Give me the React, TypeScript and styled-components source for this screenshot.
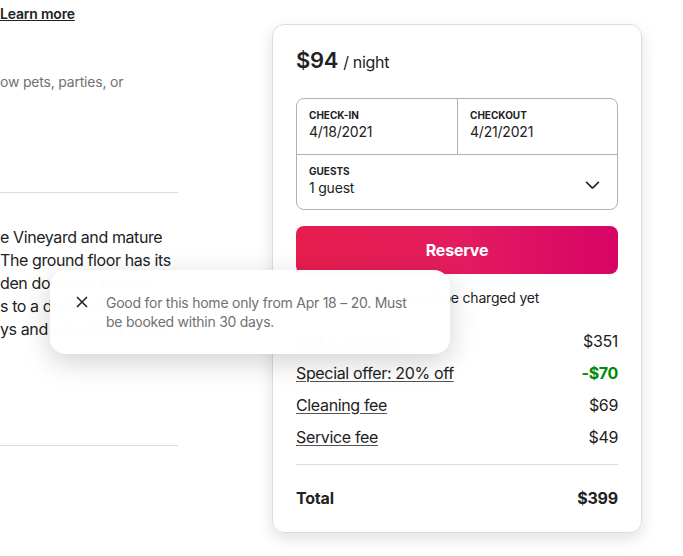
import React from "react";
import styled, { createGlobalStyle } from "styled-components";

const Global = createGlobalStyle`
  html, body { margin: 0; padding: 0; background: #fff; }
  body {
    font-family: Inter, "Noto Sans", "Liberation Sans", sans-serif;
    color: #222222;
    -webkit-font-smoothing: antialiased;
  }
  * { box-sizing: border-box; }
`;

const Page = styled.div`
  position: relative;
  display: flex;
  align-items: flex-start;
  gap: 94px;
  width: 683px;
  height: 556px;
  overflow: hidden;
`;

const LeftColumn = styled.div`
  width: 178px;
  flex: none;
  overflow: hidden;
  display: flex;
  flex-direction: column;
`;

const LearnLink = styled.a`
  margin-top: 4px;
  font-size: 14px;
  line-height: 20px;
  font-weight: 600;
  letter-spacing: -0.2px;
  color: #222;
  text-decoration: underline;
  white-space: nowrap;
`;

const MutedLine = styled.div`
  margin-top: 48px;
  font-size: 14px;
  line-height: 20px;
  letter-spacing: -0.2px;
  color: #717171;
  white-space: nowrap;
`;

const Rule = styled.hr<{ $top: number }>`
  margin: ${(p) => p.$top}px 0 0;
  border: none;
  border-top: 1px solid #dddddd;
  width: 100%;
`;

const Paragraph = styled.div`
  margin-top: 33px;
  display: flex;
  flex-direction: column;
`;

const ParaLine = styled.span`
  font-size: 16px;
  line-height: 23px;
  letter-spacing: -0.4px;
  white-space: nowrap;
  color: #222;
`;

const Card = styled.aside`
  margin-top: 24px;
  width: 370px;
  flex: none;
  border: 1px solid #dddddd;
  border-radius: 12px;
  padding: 22px 23px 24px;
  box-shadow: rgba(0, 0, 0, 0.12) 0px 6px 16px;
  display: flex;
  flex-direction: column;
`;

const PriceRow = styled.div`
  display: flex;
  align-items: baseline;
  gap: 5px;
  line-height: 26px;
`;

const Price = styled.span`
  font-size: 22px;
  font-weight: 600;
  letter-spacing: -0.3px;
  color: #222;
`;

const PerNight = styled.span`
  font-size: 16px;
  letter-spacing: -0.3px;
  color: #222;
`;

const DateBox = styled.div`
  margin-top: 23px;
  border: 1px solid #b0b0b0;
  border-radius: 8px;
  display: grid;
  grid-template-columns: 1fr 1fr;
`;

const Cell = styled.div<{ $divider?: boolean; $wide?: boolean }>`
  height: 55px;
  padding: 10px 12px 0;
  grid-column: ${(p) => (p.$wide ? "1 / span 2" : "auto")};
  border-left: ${(p) => (p.$divider ? "1px solid #b0b0b0" : "none")};
  border-top: ${(p) => (p.$wide ? "1px solid #b0b0b0" : "none")};
  display: flex;
  align-items: center;
  justify-content: space-between;
`;

const CellText = styled.div`
  display: flex;
  flex-direction: column;
  align-self: flex-start;
`;

const FieldLabel = styled.span`
  font-size: 10px;
  line-height: 12px;
  font-weight: 700;
  text-transform: uppercase;
  color: #222;
`;

const FieldValue = styled.span`
  margin-top: 2px;
  font-size: 14px;
  line-height: 18px;
  letter-spacing: -0.2px;
  color: #222;
`;

const Chevron = styled.svg`
  width: 17px;
  height: 17px;
  margin-right: 4px;
  margin-top: -6px;
  flex: none;
`;

const ReserveButton = styled.button`
  margin-top: 16px;
  height: 48px;
  width: 100%;
  border: none;
  border-radius: 8px;
  background: linear-gradient(to right, #e61e4d 0%, #e31c5f 50%, #d70466 100%);
  color: #fff;
  font-family: inherit;
  font-size: 16px;
  font-weight: 700;
  letter-spacing: -0.2px;
  cursor: pointer;
`;

const Notice = styled.div`
  margin-top: 15px;
  text-align: center;
  font-size: 14px;
  line-height: 18px;
  letter-spacing: -0.2px;
  color: #222;
`;

const Breakdown = styled.div`
  margin-top: 24px;
  display: flex;
  flex-direction: column;
  gap: 12px;
`;

const LineItem = styled.div`
  display: flex;
  justify-content: space-between;
  font-size: 16px;
  line-height: 20px;
  letter-spacing: -0.35px;
  color: #222;
`;

const ItemLabel = styled.span`
  text-decoration: underline;
  text-decoration-color: #555;
  text-underline-offset: 2px;
`;

const ItemValue = styled.span<{ $discount?: boolean }>`
  color: ${(p) => (p.$discount ? "#008a05" : "#222")};
  font-weight: ${(p) => (p.$discount ? 700 : 400)};
`;

const CardRule = styled.hr`
  margin: 17px 0 0;
  border: none;
  border-top: 1px solid #dddddd;
`;

const TotalRow = styled.div`
  margin-top: 23px;
  display: flex;
  justify-content: space-between;
  font-size: 16px;
  line-height: 20px;
  font-weight: 700;
  letter-spacing: -0.2px;
  color: #222;
`;

const Toast = styled.div`
  position: absolute;
  left: 50px;
  top: 270px;
  width: 400px;
  height: 84px;
  border-radius: 16px;
  background: rgba(255, 255, 255, 0.99);
  box-shadow: rgba(0, 0, 0, 0.18) 0px 8px 28px;
  display: flex;
  align-items: flex-start;
  gap: 18px;
  padding: 23px 20px 0 26px;
`;

const CloseIcon = styled.svg`
  width: 12px;
  height: 12px;
  margin-top: 3px;
  flex: none;
`;

const ToastText = styled.p`
  margin: 0;
  width: 318px;
  font-size: 14px;
  line-height: 19px;
  letter-spacing: -0.25px;
  color: #717171;
`;

const lineItems = [
  { label: "$94 x 3 nights", value: "$351" },
  { label: "Special offer: 20% off", value: "-$70", discount: true },
  { label: "Cleaning fee", value: "$69" },
  { label: "Service fee", value: "$49" },
];

export default function App() {
  return (
    <>
      <Global />
      <Page>
        <LeftColumn>
          <LearnLink href="#">Learn more</LearnLink>
          <MutedLine>ow pets, parties, or</MutedLine>
          <Rule $top={100} />
          <Paragraph>
            <ParaLine>e Vineyard and mature</ParaLine>
            <ParaLine>The ground floor has its</ParaLine>
            <ParaLine>den door and private</ParaLine>
            <ParaLine>s to a deck with</ParaLine>
            <ParaLine>ys and woodland views.</ParaLine>
          </Paragraph>
          <Rule $top={104} />
        </LeftColumn>

        <Card>
          <PriceRow>
            <Price>$94</Price>
            <PerNight>/ night</PerNight>
          </PriceRow>

          <DateBox>
            <Cell>
              <CellText>
                <FieldLabel>Check-in</FieldLabel>
                <FieldValue>4/18/2021</FieldValue>
              </CellText>
            </Cell>
            <Cell $divider>
              <CellText>
                <FieldLabel>Checkout</FieldLabel>
                <FieldValue>4/21/2021</FieldValue>
              </CellText>
            </Cell>
            <Cell $wide>
              <CellText>
                <FieldLabel>Guests</FieldLabel>
                <FieldValue>1 guest</FieldValue>
              </CellText>
              <Chevron viewBox="0 0 32 32" fill="none" stroke="#222" strokeWidth="3">
                <path d="M28 11 16.7 22.3a1 1 0 0 1-1.4 0L4 11" />
              </Chevron>
            </Cell>
          </DateBox>

          <ReserveButton>Reserve</ReserveButton>
          <Notice>You won't be charged yet</Notice>

          <Breakdown>
            {lineItems.map((item) => (
              <LineItem key={item.label}>
                <ItemLabel>{item.label}</ItemLabel>
                <ItemValue $discount={item.discount}>{item.value}</ItemValue>
              </LineItem>
            ))}
          </Breakdown>

          <CardRule />
          <TotalRow>
            <span>Total</span>
            <span>$399</span>
          </TotalRow>
        </Card>

        <Toast role="status">
          <CloseIcon viewBox="0 0 12 12" fill="none" stroke="#222" strokeWidth="1.6">
            <path d="M1 1l10 10M11 1 1 11" />
          </CloseIcon>
          <ToastText>
            Good for this home only from Apr 18 – 20. Must be booked within 30 days.
          </ToastText>
        </Toast>
      </Page>
    </>
  );
}
